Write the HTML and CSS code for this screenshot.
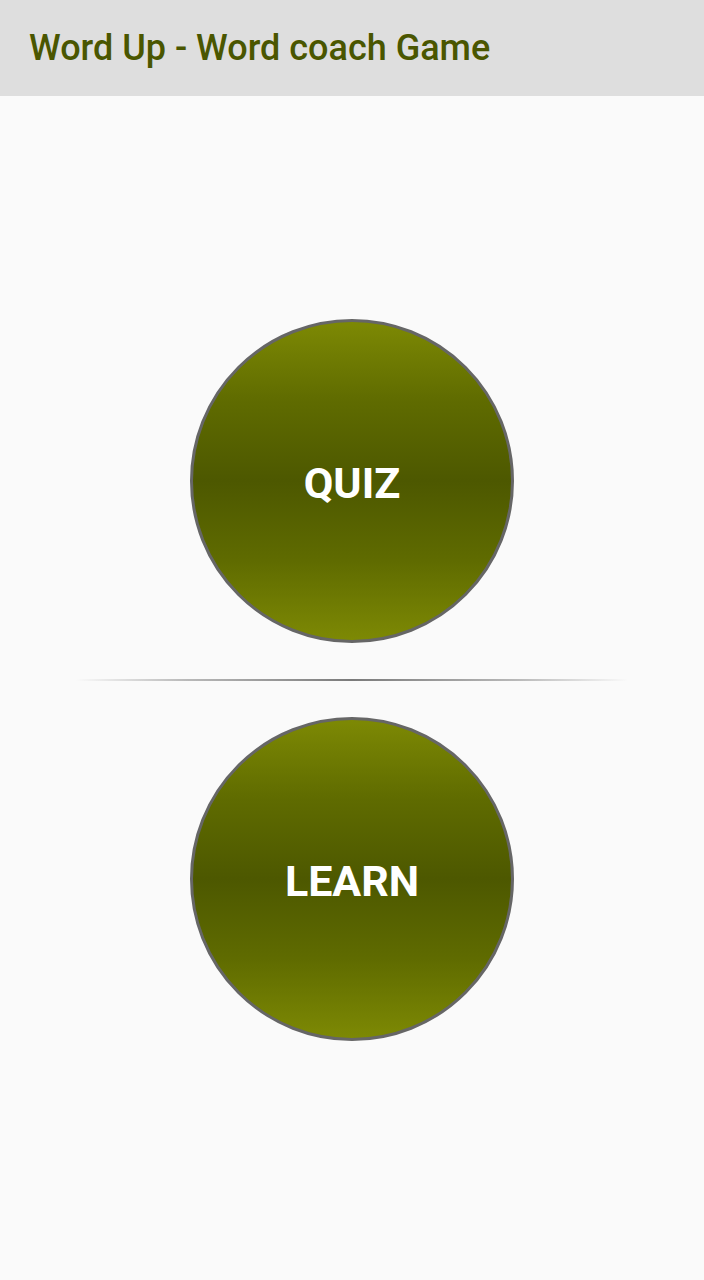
FILE: index.html
```html
<!DOCTYPE html>
<html>
<head>
<meta charset="utf-8">
<link rel="stylesheet" href="styles.css">
</head>
<body>
<header class="appbar"><h1 class="title">Word Up - Word coach Game</h1></header>
<main class="content">
  <button class="round-btn">QUIZ</button>
  <div class="divider"></div>
  <button class="round-btn">LEARN</button>
</main>
</body>
</html>
```
FILE: styles.css
```css
html, body {
  margin: 0;
  padding: 0;
}
body {
  background: #fafafa;
  font-family: Roboto, "Noto Sans", sans-serif;
  width: 704px;
  height: 1280px;
  overflow: hidden;
}
.appbar {
  height: 96px;
  background: #dedede;
  display: flex;
  align-items: center;
  padding-left: 29px;
  box-sizing: border-box;
}
.title {
  margin: 0;
  font-size: 36px;
  font-weight: 500;
  color: #4a5600;
  letter-spacing: 0;
}
.content {
  display: flex;
  flex-direction: column;
  align-items: center;
  padding-top: 223px;
}
.round-btn {
  width: 324px;
  height: 324px;
  border-radius: 50%;
  border: 3px solid #666666;
  box-sizing: border-box;
  background: linear-gradient(to bottom, #7d8904 0%, #5f6b00 25%, #4d5800 50%, #5f6b00 75%, #7d8904 100%);
  color: #ffffff;
  font-family: Roboto, "Noto Sans", sans-serif;
  font-weight: 700;
  font-size: 43px;
  padding: 4px 0 0;
  display: flex;
  align-items: center;
  justify-content: center;
}
.divider {
  width: 552px;
  height: 2px;
  margin: 36px 0 36px;
  background: linear-gradient(to right, rgba(120,120,120,0) 0%, rgba(120,120,120,0.5) 20%, #7a7a7a 50%, rgba(120,120,120,0.5) 80%, rgba(120,120,120,0) 100%);
}
```
